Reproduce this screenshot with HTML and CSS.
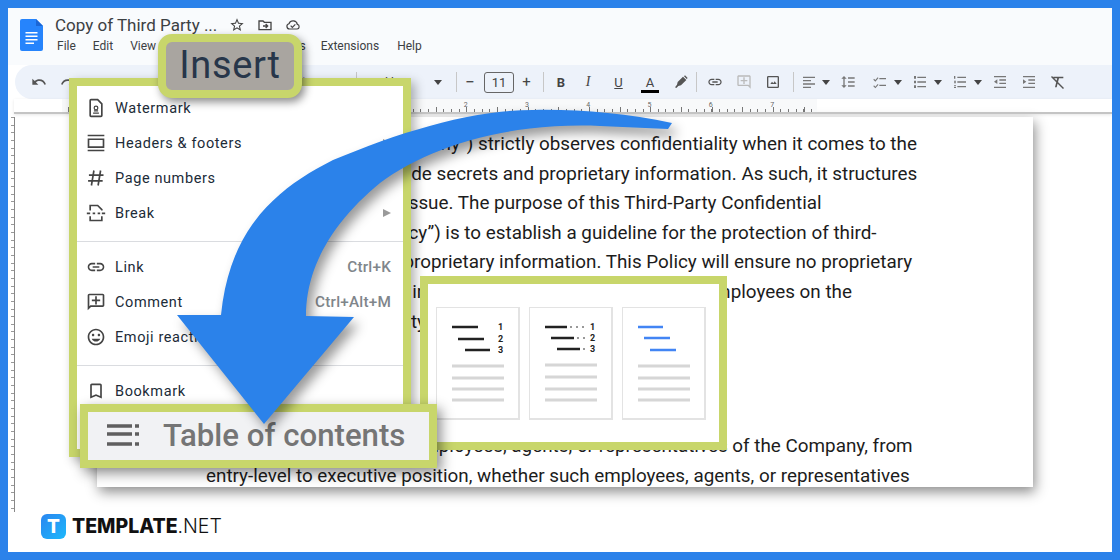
FILE: index.html
```html
<!DOCTYPE html>
<html lang="en">
<head>
<meta charset="utf-8">
<title>Google Docs – Insert Table of contents</title>
<link rel="stylesheet" href="styles.css">
</head>
<body>
<div class="frame">
  <header class="head">
    <svg class="doc-logo" viewBox="0 0 23 32"><path fill="#2684fc" d="M2 0h14l7 7v23a2 2 0 0 1-2 2H2a2 2 0 0 1-2-2V2a2 2 0 0 1 2-2z"/><path fill="#1a66d6" d="M16 0l7 7h-7z"/><path fill="#fff" d="M5.500 13h12v1.600h-12zM5.500 16.500h12v1.600h-12zM5.500 20h12v1.600h-12zM5.500 23.500h8.500v1.600h-8.500z"/></svg>
    <div class="head-col">
      <div class="title-row">
        <span class="title">Copy of Third Party ...</span>
        <svg class="ti" viewBox="0 0 24 24"><path fill="#444" d="M22 9.240l-7.190-.620L12 2 9.190 8.630 2 9.240l5.460 4.730L5.820 21 12 17.270 18.180 21l-1.630-7.030L22 9.240zM12 15.400l-3.760 2.270 1-4.280-3.320-2.880 4.380-.380L12 6.100l1.710 4.040 4.380.380-3.320 2.880 1 4.280L12 15.400z"/></svg>
        <svg class="ti" viewBox="0 0 24 24"><path fill="none" stroke="#444" stroke-width="2" d="M3 6h6l2 2h10v11H3zM9 13.500h7M13 10.500l3 3-3 3"/></svg>
        <svg class="ti" viewBox="0 0 24 24"><path fill="none" stroke="#444" stroke-width="1.800" d="M7 18a4 4 0 0 1-1-7.900 6.500 6.500 0 0 1 12.500 1A3.500 3.500 0 0 1 18 18zM8.500 13l2.500 2.500 4.500-4.500"/></svg>
      </div>
      <nav class="menubar">
        <span>File</span><span>Edit</span><span>View</span><span>Insert</span><span>Format</span><span>Tools</span><span class="mb-ext">Extensions</span><span>Help</span>
      </nav>
    </div>
  </header>

  <div class="toolbar">
    <span class="tb"><svg class="i" viewBox="0 0 24 24"><path d="M12.500 8c-2.650 0-5.050.990-6.900 2.600L2 7v9h9l-3.620-3.620c1.390-1.160 3.160-1.880 5.120-1.880 3.540 0 6.550 2.310 7.600 5.500l2.370-.780C21.080 11.030 17.150 8 12.500 8z"/></svg></span>
    <span class="tb"><svg class="i flip" viewBox="0 0 24 24"><path d="M12.500 8c-2.650 0-5.050.990-6.900 2.600L2 7v9h9l-3.620-3.620c1.390-1.160 3.160-1.880 5.120-1.880 3.540 0 6.550 2.310 7.600 5.500l2.370-.780C21.080 11.030 17.150 8 12.500 8z"/></svg></span>
    <span class="tb"></span>
    <span class="tb tb-text">A</span>
    <span class="tb"></span>
    <span class="tb-hidden">100%</span>
    <span class="tb-style">Normal text</span>
    <span class="sep sep-first"></span>
    <span class="tb-font">Calibri</span>
    <span class="caret caret-font"></span>
    <span class="sep"></span>
    <span class="tb tb-text tb-minus">−</span>
    <span class="size-box">11</span>
    <span class="tb tb-text tb-plus">+</span>
    <span class="sep sep-b"></span>
    <span class="tb tb-text tb-b">B</span>
    <span class="tb tb-text tb-i">I</span>
    <span class="tb tb-text tb-u">U</span>
    <span class="tb tb-text tb-a">A</span>
    <span class="tb tb-pen"><svg class="i" viewBox="0 0 24 24"><path d="M15 4l5 5-8 8-4 1-3 3-2-1 3-4 1-4zM18 2l4 4-1.500 1.500-4-4z"/></svg></span>
    <span class="sep sep-link"></span>
    <span class="tb"><svg class="i" viewBox="0 0 24 24"><path d="M3.900 12c0-1.710 1.390-3.100 3.100-3.100h4V7H7c-2.760 0-5 2.240-5 5s2.240 5 5 5h4v-1.900H7c-1.710 0-3.100-1.390-3.100-3.100zM8 13h8v-2H8v2zm9-6h-4v1.900h4c1.710 0 3.100 1.390 3.100 3.100s-1.390 3.100-3.100 3.100h-4V17h4c2.760 0 5-2.240 5-5s-2.240-5-5-5z"/></svg></span>
    <span class="tb"><svg class="i faint" viewBox="0 0 24 24"><path d="M22 4c0-1.100-.9-2-2-2H4c-1.100 0-2 .9-2 2v12c0 1.100.9 2 2 2h14l4 4V4zm-2 13.170L18.830 16H4V4h16v13.170zM13 5h-2v4H7v2h4v4h2v-4h4V9h-4V5z"/></svg></span>
    <span class="tb"><svg class="i" viewBox="0 0 24 24"><path d="M19 3H5a2 2 0 0 0-2 2v14a2 2 0 0 0 2 2h14a2 2 0 0 0 2-2V5a2 2 0 0 0-2-2zm0 16H5V5h14zM8 15l2.500-3.500 2 2.500 2-3 3 4z"/></svg></span>
    <span class="sep sep-align"></span>
    <span class="tb tb-align"><svg class="i soft" viewBox="0 0 24 24"><path d="M3 4h18v2H3zM3 9h12v2H3zM3 14h18v2H3zM3 19h12v2H3z"/></svg></span>
    <span class="caret"></span>
    <span class="tb tb-spacing"><svg class="i soft" viewBox="0 0 24 24"><path d="M6 3l4 4H7v10h3l-4 4-4-4h3V7H2zM12 5h10v2H12zM12 11h10v2H12zM12 17h10v2H12z"/></svg></span>
    <span class="tb tb-check"><svg class="i soft" viewBox="0 0 24 24"><path d="M11 6h10v2H11zM11 16h10v2H11zM3 7l2 2 3.500-4 1.300 1L5 11.500 2 8.500zM3 17l2 2 3.500-4 1.300 1L5 21.500 2 18.500z"/></svg></span>
    <span class="caret"></span>
    <span class="tb"><svg class="i soft" viewBox="0 0 24 24"><path d="M8 4h13v2H8zM8 11h13v2H8zM8 18h13v2H8zM3 3h3v4H3zM3 10h3v4H3zM3 17h3v4H3z"/></svg></span>
    <span class="caret"></span>
    <span class="tb"><svg class="i soft" viewBox="0 0 24 24"><path d="M8 4h13v2H8zM8 11h13v2H8zM8 18h13v2H8zM3 3h2v4H3zM3 10h3v1.500H3zM3 12.500h3V14H3zM3 17h3v1.500H3zM3 19.500h3V21H3z"/></svg></span>
    <span class="caret"></span>
    <span class="tb"><svg class="i soft" viewBox="0 0 24 24"><path d="M3 3h18v2H3zM11 8h10v2H11zM11 13h10v2H11zM3 19h18v2H3zM8 8v7l-5-3.500z"/></svg></span>
    <span class="tb"><svg class="i soft" viewBox="0 0 24 24"><path d="M3 3h18v2H3zM11 8h10v2H11zM11 13h10v2H11zM3 19h18v2H3zM3 8v7l5-3.500z"/></svg></span>
    <span class="tb"><svg class="i" viewBox="0 0 24 24"><path d="M5 4h15v2.500h-6.500L10 20H7.500l3.300-13.500H5zM3 3l18 18-1.500 1.500L1.500 4.500z"/></svg></span>
  </div>

  <div class="ruler">
    <div class="ruler-scale">
      <span>2</span><span>3</span><span>4</span><span>5</span><span>6</span><span>7</span>
    </div>
  </div>

  <main class="doc-area">
    <div class="vruler"></div>
    <article class="page">
      <p class="line">That Company, (the “Company”) strictly observes confidentiality when it comes to the</p>
      <p class="line">keeping of third-party trade secrets and proprietary information. As such, it structures</p>
      <p class="line">policies to address this issue. The purpose of this Third-Party Confidential</p>
      <p class="line">Information Policy (“Policy”) is to establish a guideline for the protection of third-</p>
      <p class="line">party trade secrets and proprietary information. This Policy will ensure no proprietary</p>
      <p class="line">information is disclosed in any way, least of all by company employees on the</p>
      <p class="line">of the Company's property</p>
      <p class="line">&nbsp;</p>
      <p class="line">&nbsp;</p>
      <p class="line">&nbsp;</p>
      <p class="line line-para">This Policy applies to all employees, agents, or representatives of the Company, from</p>
      <p class="line">entry-level to executive position, whether such employees, agents, or representatives</p>
    </article>
  </main>

  <footer class="brand">
    <span class="brand-mark">T</span>
    <span class="brand-name"><b>TEMPLATE</b>.NET</span>
  </footer>

  <div class="menu callout">
    <div class="row"><svg class="ri" viewBox="0 0 24 24"><path fill="none" stroke="#444" stroke-width="2" d="M6 2h8l5 5v14a1 1 0 0 1-1 1H6a1 1 0 0 1-1-1V3a1 1 0 0 1 1-1z"/><circle cx="12" cy="12" r="2.200" fill="none" stroke="#444" stroke-width="1.500"/><path fill="none" stroke="#444" stroke-width="1.500" d="M8.500 18h7M9.500 15.500h5"/></svg><span class="label">Watermark</span></div>
    <div class="row"><svg class="ri" viewBox="0 0 24 24"><path fill="none" stroke="#444" stroke-width="2" d="M2 3h20M2 21h20M3 7.500h18v9.500H3z"/></svg><span class="label">Headers &amp; footers</span><span class="sub"></span></div>
    <div class="row"><svg class="ri" viewBox="0 0 24 24"><path fill="none" stroke="#444" stroke-width="2" d="M9.500 3L6.500 21M17.500 3L14.500 21M3.500 8.500H21M2.500 15.500H20"/></svg><span class="label">Page numbers</span></div>
    <div class="row"><svg class="ri" viewBox="0 0 24 24"><path fill="none" stroke="#444" stroke-width="2" d="M5 9V3h9l5 5v1M5 16v5h14v-5M1 12.500h4M8 12.500h3M14 12.500h3M19 12.500h4"/></svg><span class="label">Break</span><span class="sub"></span></div>
    <div class="divider"></div>
    <div class="row"><svg class="ri" viewBox="0 0 24 24"><path fill="#444" d="M3.900 12c0-1.710 1.390-3.100 3.100-3.100h4V7H7c-2.760 0-5 2.240-5 5s2.240 5 5 5h4v-1.900H7c-1.710 0-3.100-1.390-3.100-3.100zM8 13h8v-2H8v2zm9-6h-4v1.900h4c1.710 0 3.100 1.390 3.100 3.100s-1.390 3.100-3.100 3.100h-4V17h4c2.760 0 5-2.240 5-5s-2.240-5-5-5z"/></svg><span class="label">Link</span><span class="key">Ctrl+K</span></div>
    <div class="row"><svg class="ri flip" viewBox="0 0 24 24"><path fill="#444" d="M22 4c0-1.100-.9-2-2-2H4c-1.100 0-2 .9-2 2v12c0 1.100.9 2 2 2h14l4 4V4zm-2 13.170L18.830 16H4V4h16v13.170zM13 5h-2v4H7v2h4v4h2v-4h4V9h-4V5z"/></svg><span class="label">Comment</span><span class="key">Ctrl+Alt+M</span></div>
    <div class="row"><svg class="ri" viewBox="0 0 24 24"><path fill="#444" d="M11.990 2C6.470 2 2 6.480 2 12s4.470 10 9.990 10C17.520 22 22 17.520 22 12S17.520 2 11.990 2zM12 20c-4.420 0-8-3.580-8-8s3.580-8 8-8 8 3.580 8 8-3.580 8-8 8zm3.500-9c.830 0 1.500-.670 1.500-1.500S16.330 8 15.500 8 14 8.670 14 9.500s.670 1.500 1.500 1.500zm-7 0c.830 0 1.500-.670 1.500-1.500S9.330 8 8.500 8 7 8.670 7 9.500 7.670 11 8.500 11zm3.500 6.500c2.330 0 4.310-1.460 5.110-3.500H6.890c.8 2.040 2.780 3.500 5.110 3.500z"/></svg><span class="label">Emoji reaction</span></div>
    <div class="divider"></div>
    <div class="row"><svg class="ri" viewBox="0 0 24 24"><path fill="#444" d="M17 3H7c-1.100 0-2 .9-2 2v16l7-3 7 3V5c0-1.100-.9-2-2-2zm0 15l-5-2.180L7 18V5h10v13z"/></svg><span class="label">Bookmark</span></div>
  </div>

  <div class="styles callout">
    <div class="toc-card"><svg viewBox="0 0 84 113">
      <path class="k" d="M16 20h26M22 32h26M29 43h25"/>
      <text class="n" x="62" y="23">1</text><text class="n" x="62" y="35">2</text><text class="n" x="62" y="46">3</text>
      <path class="g" d="M16 59h52M16 71h52M16 82h52M16 93h52"/>
    </svg></div>
    <div class="toc-card"><svg viewBox="0 0 84 113">
      <path class="k" d="M16 20h22M22 31h23M28 42h23"/>
      <path class="d" d="M41 20h18M48 31h11M54 42h5"/>
      <text class="n" x="61" y="23">1</text><text class="n" x="61" y="34">2</text><text class="n" x="61" y="45">3</text>
      <path class="g" d="M16 58h52M16 70h52M16 82h52M16 93h52"/>
    </svg></div>
    <div class="toc-card"><svg viewBox="0 0 84 113">
      <path class="b" d="M16 20h25M22 31h26M28 43h26"/>
      <path class="g" d="M16 59h52M16 71h52M16 82h52M16 93h52"/>
    </svg></div>
  </div>

  <div class="toc callout">
    <svg class="toc-icon" viewBox="0 0 32 24"><path fill="none" stroke="#5f5f5f" stroke-width="3.400" d="M0 2h25M0 10h25M0 20h25M28 2h4M28 10h4M28 20h4"/></svg>
    <span class="toc-label">Table of contents</span>
  </div>

  <div class="insert callout"><span>Insert</span></div>

  <svg class="arrow" viewBox="0 0 1120 560"><path d="M672 123C625 113 575 109 533 110C470 110 400 132 333 160C280 187 230 225 221 315L177 315L264 424L354 317L306 316C306 265 335 220 380 183C425 150 500 122 600 126L668 129Z"/></svg>
</div>
</body>
</html>
```
FILE: styles.css
```css
* { box-sizing: border-box; }
html, body { margin: 0; padding: 0; }
body { width: 1120px; height: 560px; overflow: hidden; font-family: Roboto, "Liberation Sans", sans-serif; }
.frame { position: relative; width: 1120px; height: 560px; border: 8px solid #2b82ea; background: #fff; overflow: hidden; }

.head { display: flex; height: 57px; background: #f9fbfd; padding: 11px 0 0 12px; }
.doc-logo { width: 23px; height: 32px; flex: none; }
.head-col { margin: -4px 0 0 12px; }
.title-row { display: flex; align-items: center; height: 20px; }
.title { font-size: 17px; color: #3c4043; width: 164px; white-space: nowrap; }
.ti { width: 16px; height: 16px; margin-left: 10px; }
.ti + .ti { margin-left: 12px; }
.menubar { display: flex; gap: 17px; height: 20px; align-items: center; margin: 1px 0 0 2px; font-size: 12px; color: #3c4043; white-space: nowrap; }
.mb-ext { margin: 0 1px 0 -2px; }

.toolbar { display: flex; align-items: center; height: 34px; margin-left: 7px; padding-left: 9px; background: #edf2fa; border-radius: 17px 0 0 17px; color: #444; }
.tb { flex: none; width: 29px; height: 20px; display: flex; align-items: center; justify-content: center; font-size: 13px; }
.i { width: 16px; height: 16px; fill: #555; }
.i.soft { fill: #777; }
.i.faint { fill: #bbb; }
.flip { transform: scaleX(-1); }
.tb-hidden { width: 40px; flex: none; font-size: 12px; }
.tb-style { width: 147px; flex: none; font-size: 12px; white-space: nowrap; text-align: right; padding-right: 50px; }
.sep { flex: none; width: 1px; height: 20px; background: #c7c7c7; margin: 0 4px; }
.sep-first { margin-left: 0; }
.tb-font { flex: none; width: 73px; padding-left: 9px; font-size: 12.500px; }
.caret { flex: none; width: 0; height: 0; border: 4px solid transparent; border-top: 5px solid #444; border-bottom: 0; margin: 0 3px 0 0; }
.caret-font { margin: 0 10px 0 0; }
.tb-minus { width: 18px; margin-right: 5px; font-size: 17px; }
.tb-plus { width: 25px; font-size: 15px; }
.size-box { flex: none; width: 30px; height: 21px; border: 1px solid #666; border-radius: 3px; font-size: 13px; text-align: center; line-height: 19px; }
.tb-b { width: 26px; font-weight: 700; }
.tb-i { width: 28px; font-style: italic; font-family: "Liberation Serif", serif; font-size: 14px; }
.tb-u { width: 33px; text-decoration: underline; }
.tb-a { border-bottom: 3px solid #000; height: 18px; margin: 3px 6px 0; width: 18px; }
.tb-pen { width: 31px; }
.sep-link { margin: 0 3px 0 0; }
.sep-align { margin: 0 2px 0 5.500px; }
.tb-align { width: 26px; }
.tb-spacing { width: 31px; }
.tb-check { margin-left: 1.500px; }

.ruler { height: 15px; border-bottom: 2px solid #c4c4c4; box-shadow: 0 1px 3px rgba(0,0,0,.1); margin-left: 6px; position: relative; }
.ruler-scale {
  width: 755px; height: 13px; margin-left: 48px; padding-left: 373px; display: flex; font-size: 7px; color: #666; line-height: 12px;
  background-color: #f8f9fa;
  background-image:
    repeating-linear-gradient(90deg, #777 0 1px, transparent 1px 7.660px),
    repeating-linear-gradient(90deg, #777 0 1px, transparent 1px 30.650px);
  background-size: 100% 3px, 100% 5px;
  background-position: 6px 100%, 6px 100%;
  background-repeat: no-repeat;
}
.ruler-scale span { flex: none; width: 61.300px; text-align: center; }

.doc-area { display: flex; height: 398px; padding-top: 3px; }
.vruler {
  flex: none; width: 7px; border-right: 1px solid #888;
  background-image: repeating-linear-gradient(180deg, #999 0 1px, transparent 1px 7.660px);
  background-size: 3px 100%; background-position: right top; background-repeat: no-repeat;
}
.page { flex: none; width: 936px; height: 370px; margin-left: 82px; padding: 13px 0 0 109px; background: #fff; box-shadow: 2px 5px 12px rgba(0,0,0,.45); overflow: hidden; }
.line { margin: 0; font-size: 18.850px; line-height: 29.600px; color: #1c1c1c; white-space: nowrap; }
.line-para { margin-top: 6px; }

.brand { display: flex; align-items: center; gap: 6px; height: 25px; margin: 2px 0 0 33px; }
.brand-mark { width: 25px; height: 25px; border-radius: 6px; background: linear-gradient(135deg, #2b86f0, #1cb8fb); color: #fff; font: 800 19px/25px Inter, sans-serif; text-align: center; }
.brand-name { font: 300 19.500px/25px Inter, sans-serif; color: #111; }
.brand-name b { font-weight: 800; }

.callout { position: absolute; border: 8px solid #c8d66b; }
.menu { left: 61px; top: 70px; width: 342px; height: 379px; background: #fff; padding-top: 4.500px; overflow: hidden; box-shadow: 4px 4px 10px rgba(0,0,0,.3); }
.row { display: flex; align-items: center; height: 35px; padding: 0 12px 0 9px; font-size: 14.500px; letter-spacing: .6px; color: #202b38; }
.ri { width: 20px; height: 20px; flex: none; margin-right: 9px; }
.label { flex: 1; white-space: nowrap; }
.key { color: #80868b; font-size: 15.300px; font-weight: 500; letter-spacing: .2px; }
.sub { width: 0; height: 0; border-left: 8px solid #9a9a9a; border-top: 4px solid transparent; border-bottom: 4px solid transparent; }
.divider { height: 1px; background: #dadce0; margin: 10px 0 8px; }

.insert { left: 150px; top: 26px; width: 144px; height: 64px; border-radius: 14px; background: #a9a5a0; display: flex; align-items: center; justify-content: center; box-shadow: 3px 4px 8px rgba(0,0,0,.45); }
.insert span { font-size: 38px; color: #27364a; letter-spacing: .7px; margin-top: -2px; }

.toc { left: 72px; top: 396px; width: 357px; height: 64px; background: #f1f2f4; display: flex; align-items: center; padding-left: 19px; box-shadow: 4px 5px 12px rgba(0,0,0,.45); }
.toc-icon { width: 32px; height: 24px; flex: none; margin-right: 24px; }
.toc-label { font-size: 31.200px; font-weight: 500; color: #757575; white-space: nowrap; margin-top: -2px; }

.styles { left: 412px; top: 268px; width: 307px; height: 174px; background: #fff; display: flex; gap: 9px; padding: 23px 8px; }
.toc-card { width: 84px; height: 113px; border: 1px solid #e3e3e3; border-width: 1px 2px 2px 1px; overflow: hidden; }
.toc-card svg { display: block; width: 84px; height: 113px; margin: -1px 0 0 -1px; }
.k { stroke: #222; stroke-width: 2.500; fill: none; }
.d { stroke: #999; stroke-width: 2; stroke-dasharray: 2 4; fill: none; }
.b { stroke: #4285f4; stroke-width: 2.500; fill: none; }
.g { stroke: #d6d6d6; stroke-width: 3; fill: none; }
.n { font: 700 9px Roboto, sans-serif; fill: #222; }

.arrow { position: absolute; left: -8px; top: -8px; width: 1120px; height: 560px; fill: #2b82ea; filter: drop-shadow(5px 7px 6px rgba(0,0,0,.4)); pointer-events: none; }
```
